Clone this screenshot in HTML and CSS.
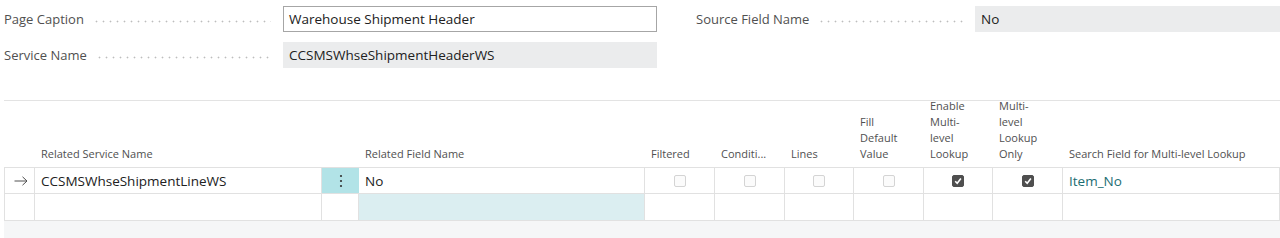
FILE: index.html
```html
<!DOCTYPE html>
<html>
<head>
<meta charset="utf-8">
<link rel="stylesheet" href="styles.css">
</head>
<body>
<div class="page">
  <div class="form">
    <div class="col">
      <div class="field">
        <div class="label"><span class="ltext">Page Caption</span><span class="dots"></span></div>
        <div class="value input">Warehouse Shipment Header</div>
      </div>
      <div class="field">
        <div class="label"><span class="ltext">Service Name</span><span class="dots"></span></div>
        <div class="value ro">CCSMSWhseShipmentHeaderWS</div>
      </div>
    </div>
    <div class="col">
      <div class="field">
        <div class="label"><span class="ltext">Source Field Name</span><span class="dots"></span></div>
        <div class="value ro fill">No</div>
      </div>
    </div>
  </div>

  <div class="sep"></div>

  <div class="grid">
    <div class="hd"></div>
    <div class="hd">Related Service Name</div>
    <div class="hd"></div>
    <div class="hd">Related Field Name</div>
    <div class="hd">Filtered</div>
    <div class="hd">Conditi...</div>
    <div class="hd">Lines</div>
    <div class="hd">Fill<br>Default<br>Value</div>
    <div class="hd">Enable<br>Multi-<br>level<br>Lookup</div>
    <div class="hd">Multi-<br>level<br>Lookup<br>Only</div>
    <div class="hd">Search Field for Multi-level Lookup</div>

    <div class="c first arrow"><svg width="14" height="10" viewBox="0 0 14 10"><path d="M0.5 5 H13 M8.5 0.8 L13 5 L8.5 9.2" fill="none" stroke="#505050" stroke-width="1"/></svg></div>
    <div class="c txt">CCSMSWhseShipmentLineWS</div>
    <div class="c menu"><svg width="4" height="14" viewBox="0 0 4 14"><circle cx="2" cy="2" r="1.1" fill="#333"/><circle cx="2" cy="7" r="1.1" fill="#333"/><circle cx="2" cy="12" r="1.1" fill="#333"/></svg></div>
    <div class="c txt">No</div>
    <div class="c cb"><span class="box"></span></div>
    <div class="c cb"><span class="box"></span></div>
    <div class="c cb"><span class="box"></span></div>
    <div class="c cb"><span class="box"></span></div>
    <div class="c cb"><span class="box on"><svg width="10" height="10" viewBox="0 0 10 10"><path d="M2.2 5.2 L4.2 7.2 L7.9 2.6" fill="none" stroke="#fff" stroke-width="1.6"/></svg></span></div>
    <div class="c cb"><span class="box on"><svg width="10" height="10" viewBox="0 0 10 10"><path d="M2.2 5.2 L4.2 7.2 L7.9 2.6" fill="none" stroke="#fff" stroke-width="1.6"/></svg></span></div>
    <div class="c txt link">Item_No</div>

    <div class="c first"></div>
    <div class="c"></div>
    <div class="c"></div>
    <div class="c sel"></div>
    <div class="c"></div>
    <div class="c"></div>
    <div class="c"></div>
    <div class="c"></div>
    <div class="c"></div>
    <div class="c"></div>
    <div class="c"></div>
  </div>
  <div class="footer"></div>
</div>
</body>
</html>
```

FILE: styles.css
```css
html, body {
  margin: 0;
  padding: 0;
  background: #ffffff;
  overflow: hidden;
}
body {
  font-family: "Open Sans", "Noto Sans", sans-serif;
  color: #212121;
  width: 1280px;
  height: 238px;
}
.page {
  width: 1280px;
  overflow: hidden;
}
.form {
  display: grid;
  grid-template-columns: 653px 1fr;
  column-gap: 39px;
  padding: 6px 0 0 4px;
  height: 88px;
  box-sizing: border-box;
}
.field {
  display: flex;
  height: 26px;
  margin-bottom: 10px;
}
.label {
  width: 279px;
  flex: none;
  display: flex;
  align-items: center;
  font-size: 13px;
  color: #505050;
}
.ltext {
  white-space: nowrap;
}
.dots {
  flex: 1;
  height: 3px;
  margin: 5px 12px 0 9px;
  background-image: radial-gradient(circle, #bdbdbd 0.8px, transparent 1.1px);
  background-size: 7px 3px;
  background-repeat: repeat-x;
}
.value {
  width: 374px;
  flex: none;
  box-sizing: border-box;
  display: flex;
  align-items: center;
  padding-left: 6px;
  font-size: 13.5px;
  color: #212121;
}
.value.fill {
  width: auto;
  flex: 1;
}
.input {
  border: 1px solid #a6a6a6;
  padding-left: 5px;
}
.ro {
  background: #ebeced;
}
.sep {
  margin: 12px 0 0 4px;
  height: 1px;
  background: #e3e3e3;
}
.grid {
  display: grid;
  grid-template-columns: 31px 287px 37px 286px 70px 70px 69px 70px 69px 70px 1fr;
  grid-template-rows: 67px 26px 27px;
  margin-left: 4px;
}
.hd {
  display: flex;
  align-items: flex-end;
  padding: 0 6px 5px 6px;
  font-size: 11px;
  line-height: 16px;
  color: #505050;
  border-bottom: 1px solid #e1e1e1;
  white-space: nowrap;
}
.c {
  box-sizing: border-box;
  border-right: 1px solid #e1e1e1;
  border-bottom: 1px solid #e1e1e1;
  display: flex;
  align-items: center;
  font-size: 13.5px;
}
.first {
  border-left: 1px solid #e1e1e1;
}
.arrow {
  justify-content: center;
  padding-left: 2px;
}
.txt {
  padding-left: 6px;
  color: #212121;
}
.menu {
  background: #b2e3e7;
  justify-content: center;
  border-right: none;
}
.link {
  color: #1b6d72;
}
.cb {
  justify-content: center;
}
.box {
  width: 12px;
  height: 12px;
  box-sizing: border-box;
  border: 1px solid #d4d4d4;
  border-radius: 2px;
  background: #fbfbfb;
  display: flex;
  align-items: center;
  justify-content: center;
}
.box.on {
  background: #4f4f4f;
  border-color: #4f4f4f;
}
.sel {
  background: #dbeef1;
}
.footer {
  margin-left: 4px;
  height: 20px;
  background: #f5f6f7;
}
```
